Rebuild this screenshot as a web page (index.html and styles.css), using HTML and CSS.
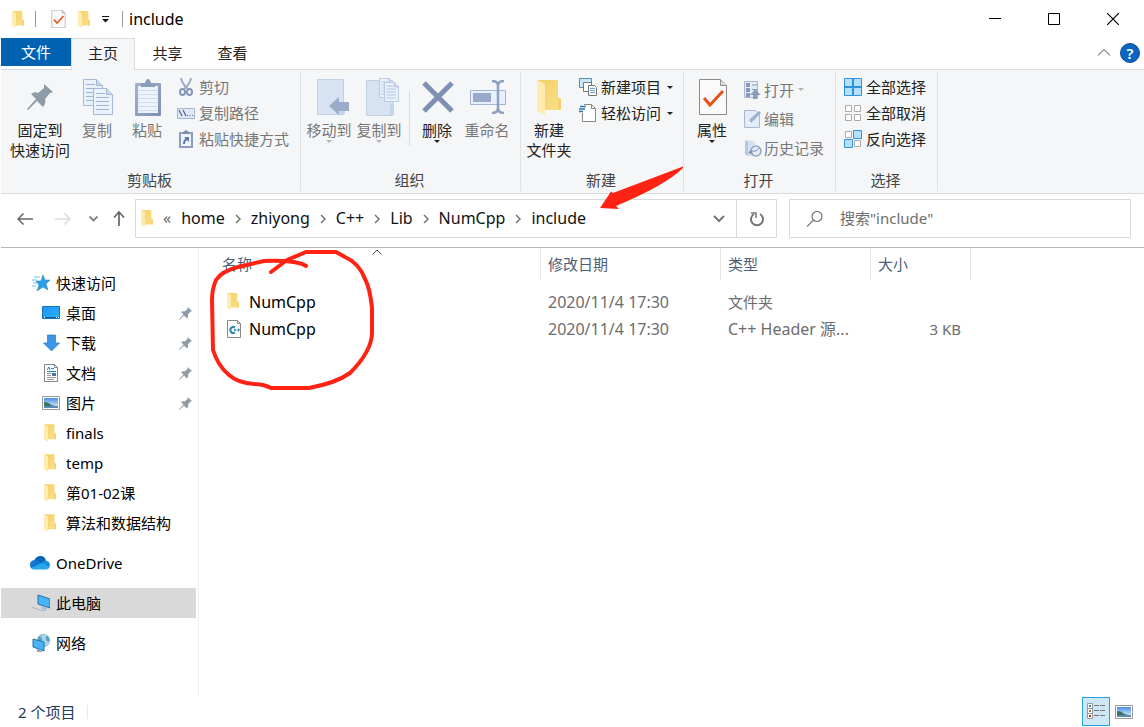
FILE: index.html
```html
<!DOCTYPE html>
<html lang="zh-CN">
<head>
<meta charset="utf-8">
<title>include</title>
<link rel="stylesheet" href="styles.css">
</head>
<body>
<svg class="defs" aria-hidden="true">
  <defs>
    <linearGradient id="gold" x1="0" y1="0" x2="1" y2="1"><stop offset="0" stop-color="#f3cf66"/><stop offset="1" stop-color="#fbe08c"/></linearGradient>
    <linearGradient id="slate" x1="0" y1="0" x2="1" y2="1"><stop offset="0" stop-color="#a5b3cc"/><stop offset="1" stop-color="#7d90b4"/></linearGradient>
    <linearGradient id="screen" x1="0" y1="0" x2="1" y2="1"><stop offset="0" stop-color="#1c94f5"/><stop offset="1" stop-color="#2db0ff"/></linearGradient>
    <linearGradient id="sky" x1="0" y1="0" x2="0" y2="1"><stop offset="0" stop-color="#4a8fe8"/><stop offset="1" stop-color="#e8f3fa"/></linearGradient>
  </defs>
  <symbol id="folder" viewBox="0 0 24 35">
    <path d="M1 0h20v17l3 2v11H6z" fill="url(#gold)"/>
    <path d="M21 18l3 1v11h-3z" fill="#f5d06c"/>
    <path d="M0 0l8 4v31l-8-4z" fill="#ffeab0"/>
  </symbol>
  <symbol id="pin" viewBox="0 0 26 26">
    <path d="M17 0l9 8-2 1-1 0-5 6c1 3 0 5-2 8l-6-6-9 9-1-1 9-10-5-5c3-2 5-2 7-1l6-5z" fill="#8f9ba6"/>
  </symbol>
  <symbol id="check" viewBox="0 0 28 36">
    <path d="M.5.5h21l6 6v29H.5z" fill="#fafafa" stroke="#8a8a8a"/><path d="M21.500.5v6h6" fill="#ddd" stroke="#8a8a8a"/>
    <path d="M5 19l6 7L24 12" fill="none" stroke="#e8531a" stroke-width="3"/>
  </symbol>
  <symbol id="page" viewBox="0 0 20 27">
    <path d="M.5.5h13l6 6v20H.5z" fill="#e9f1fb" stroke="#a7b8d6"/><path d="M13.500.5v6h6" fill="#c9d6ea" stroke="#a7b8d6"/>
    <path d="M3 5.500h9M3 9.500h13M3 13.500h13M3 17.500h13M3 21.500h13" stroke="#a2b4d4"/>
  </symbol>
  <symbol id="photo" viewBox="0 0 18 14">
    <path d="M.5.500h17v13H.5z" fill="#fff" stroke="#999"/><path d="M2 2h14v10H2z" fill="url(#sky)"/>
    <path d="M2 6q4 0 6 2t8 2v1H2z" fill="#3d6f62"/><path d="M2 10h14v2H2z" fill="#5c8bb0"/>
  </symbol>
  <symbol id="chev" viewBox="0 0 8 10"><path d="M2 1l4 4-4 4" fill="none" stroke="#777" stroke-width="1.500"/></symbol>
  <symbol id="down" viewBox="0 0 6 3"><path d="M0 0h6L3 3z" fill="currentColor"/></symbol>
</svg>

<header class="titlebar">
  <svg class="t-folder"><use href="#folder"/></svg>
  <span class="t-sep"></span>
  <button class="bare t-check" aria-label="属性"><svg width="15" height="18"><use href="#check"/></svg></button>
  <button class="bare t-new" aria-label="新建文件夹"><svg class="t-folder"><use href="#folder"/></svg></button>
  <button class="bare t-more" aria-label="自定义快速访问工具栏"><svg width="7" height="7" viewBox="0 0 7 7"><path d="M0 .5h7" stroke="#111"/><path d="M0 3h7L3.500 6.500z" fill="#111"/></svg></button>
  <span class="t-sep"></span>
  <span class="title">include</span>
  <div class="winbtns">
    <button class="bare" aria-label="最小化"><svg width="12" height="12"><path d="M0 5.500h12" stroke="#000"/></svg></button>
    <button class="bare" aria-label="最大化"><svg width="12" height="12"><path d="M.5.500h11v11H.5z" fill="none" stroke="#000"/></svg></button>
    <button class="bare" aria-label="关闭"><svg width="12" height="12"><path d="M0 0l12 12M12 0L0 12" stroke="#000" stroke-width="1.200"/></svg></button>
  </div>
</header>

<nav class="tabs">
  <button class="tab file">文件</button>
  <button class="tab active">主页</button>
  <button class="tab">共享</button>
  <button class="tab">查看</button>
  <div class="tabs-end">
    <button class="bare" aria-label="折叠功能区"><svg width="12" height="7"><path d="M0 6.500l6-6 6 6" fill="none" stroke="#999" stroke-width="1.300"/></svg></button>
    <button class="help" aria-label="帮助">?</button>
  </div>
</nav>

<section class="ribbon">
  <div class="group g-clip">
    <div class="tools">
      <button class="big wide"><span class="pic"><svg width="26" height="26"><use href="#pin"/></svg></span>固定到<br>快速访问</button>
      <button class="big off"><span class="pic nudge"><svg width="30" height="36"><use href="#page" width="20" height="27"/><use href="#page" x="10" y="9" width="20" height="27"/></svg></span>复制</button>
      <button class="big off"><span class="pic nudge"><svg width="26" height="37" viewBox="0 0 26 37"><rect y="4" width="26" height="33" rx="1" fill="url(#slate)"/><path d="M3 7h20v27H3z" fill="#edf3fb"/><path d="M3 11.500h20M3 15.500h20M3 19.500h20M3 23.500h20M3 27.500h20M3 31.500h20" stroke="#cfdcee"/><path d="M6 8V4h4q1-4 3-4t3 4h4v4z" fill="#8c9cbb"/></svg></span>粘贴</button>
      <div class="list">
        <button class="small off"><svg viewBox="0 0 18 18"><path d="M4 0q1 6 7 11M14 0q-1 6-7 11" fill="none" stroke="#9fadc8" stroke-width="2"/><ellipse cx="5.500" cy="14" rx="2.500" ry="3" fill="none" stroke="#8496b7" stroke-width="2"/><ellipse cx="12.500" cy="14" rx="2.500" ry="3" fill="none" stroke="#8496b7" stroke-width="2"/></svg>剪切</button>
        <button class="small off"><svg viewBox="0 0 18 18"><path d="M.5 4.500h17v10H.5z" fill="#dfe9f7" stroke="#a5b5d0"/><path d="M2 6l3 6M6 6l3 6M10 11.500h1M12.500 11.500h1M15 11.500h1" stroke="#51648b" stroke-width="1.200"/></svg>复制路径</button>
        <button class="small off"><svg viewBox="0 0 18 18"><path d="M2 2h14v16H2z" fill="#8c9dbd"/><path d="M4 4h10v12H4z" fill="#eef4fb"/><path d="M6 4V2l3-2 3 2v2z" fill="#7c8daf"/><path d="M7 7h5v5l-2-2q-2 1-2 4H6q0-4 2.500-5.500z" fill="#5f7aad"/></svg>粘贴快捷方式</button>
      </div>
    </div>
    <div class="label">剪贴板</div>
  </div>
  <div class="group g-org">
    <div class="tools">
      <button class="big off"><span class="pic shift"><svg width="32" height="36" viewBox="0 0 32 36"><path d="M.5.500h26v35H.5z" fill="#d7e2f3" stroke="#c2d0e5"/><path d="M23 26q5-4 5 9h-5z" fill="#c5d4e9"/><path d="M12 27l10-9v5h10v9H22v4z" fill="#9bacc9"/></svg></span>移动到<svg class="caret"><use href="#down"/></svg></button>
      <button class="big off"><span class="pic shift"><svg width="34" height="38" viewBox="0 0 34 38"><path d="M.5 2.500h26v35H.5z" fill="#d7e2f3" stroke="#c2d0e5"/><path d="M24 37V27q4-5 4 0v10z" fill="#c5d4e9"/><use href="#page" x="13" width="15" height="20"/><use href="#page" x="18" y="4" width="15" height="20"/></svg></span>复制到<svg class="caret"><use href="#down"/></svg></button>
      <span class="divider"></span>
      <button class="big"><span class="pic nudge"><svg width="32" height="32" viewBox="0 0 32 32"><path d="M2 2l28 28M30 2L2 30" stroke="#7e90b3" stroke-width="5"/></svg></span>删除<svg class="caret"><use href="#down"/></svg></button>
      <button class="big off"><span class="pic nudge"><svg width="36" height="34" viewBox="0 0 36 34"><path d="M.5 10.500h35v14H.5z" fill="#e7f0fc" stroke="#a3b5d6"/><path d="M3 13h18v9H3z" fill="#9aaaca"/><path d="M22 1q6 0 6 5v22q0 5-6 5M34 1q-6 0-6 5M28 28q0 5 6 5" fill="none" stroke="#8ea0c0" stroke-width="2.500"/></svg></span>重命名</button>
    </div>
    <div class="label">组织</div>
  </div>
  <div class="group g-new">
    <div class="tools">
      <button class="big"><span class="pic"><svg width="24" height="35"><use href="#folder"/></svg></span>新建<br>文件夹</button>
      <div class="list">
        <button class="small"><svg viewBox="0 0 18 18"><path d="M.5.500h12v9H.5z" fill="#cbe8f8" stroke="#5c8ba8"/><path d="M4.500 4.500h8v9h-8z" fill="#fff" stroke="#777"/><path d="M9.500 7.500h6l2 2v8h-8z" fill="#fff" stroke="#777"/><path d="M11 10.500h5M11 12.500h5M11 14.500h5" stroke="#6da4d4"/></svg>新建项目<svg class="caret"><use href="#down"/></svg></button>
        <button class="small"><svg viewBox="0 0 18 18"><path d="M3.500.500h9l4 4v13h-13z" fill="#fff"/><path d="M5 .5h7.500l4 4v13h-13V9M12.500.500v4h4" fill="none" stroke="#888"/><path d="M1 2.500h6M0 5h6M0 7.500h4" stroke="#2e75b6" stroke-width="1.500"/></svg>轻松访问<svg class="caret"><use href="#down"/></svg></button>
      </div>
    </div>
    <div class="label">新建</div>
  </div>
  <div class="group g-open">
    <div class="tools">
      <button class="big"><span class="pic nudge"><svg width="28" height="36"><use href="#check"/></svg></span>属性<svg class="caret"><use href="#down"/></svg></button>
      <div class="list loose">
        <button class="small off"><svg viewBox="0 0 18 18"><path d="M.5.500h13v16H.5z" fill="#e6eefa" stroke="#a8b6cf"/><path d="M2 2h4v4H2zM2 7h4v4H2zM2 12h4v4H2z" fill="#8798b8"/><path d="M8 4h5M8 8.500h5" stroke="#8798b8"/><path d="M11.500 8l5 6h-3v4H9v-4H6z" fill="#8b9cbc"/></svg>打开<svg class="caret"><use href="#down"/></svg></button>
        <button class="small off"><svg viewBox="0 0 18 18"><path d="M.5.500h11l4 4v13H.5z" fill="#e3edfa" stroke="#a8b8d3"/><path d="M3 15l2-5L15 1l2 2L7 13z" fill="#9eafcb"/><path d="M3 15l2-5 2 3z" fill="#fff"/></svg>编辑</button>
        <button class="small off"><svg viewBox="0 0 18 18"><path d="M1 1l10 1v15H4l-3-2z" fill="#d5e1f1"/><path d="M1 1l3 2v14l-3-2z" fill="#b6c7df"/><circle cx="12" cy="12" r="5" fill="#e6edf7" stroke="#94a5c2" stroke-width="1.500"/><path d="M12 12l3-3M12 12H8" stroke="#7d90b3"/><path d="M4 14l3-3 2 4z" fill="#7d90b3"/></svg>历史记录</button>
      </div>
    </div>
    <div class="label">打开</div>
  </div>
  <div class="group g-select">
    <div class="tools">
      <div class="list">
        <button class="small"><svg viewBox="0 0 18 18"><path d="M.5.500h17v17H.5z" fill="#b5e0fc" stroke="#2e93dd"/><path d="M9 0v18M0 9h18" stroke="#2e93dd" stroke-width="2"/></svg>全部选择</button>
        <button class="small"><svg viewBox="0 0 18 18"><path d="M1.500 1.500h6v6h-6zM10.500 1.500h6v6h-6zM1.500 10.500h6v6h-6zM10.500 10.500h6v6h-6z" fill="#fff" stroke="#aaa"/></svg>全部取消</button>
        <button class="small"><svg viewBox="0 0 18 18"><path d="M1.500 1.500h6v6h-6zM10.500 10.500h6v6h-6z" fill="#fff" stroke="#aaa"/><path d="M9.500.500h8v8h-8zM.5 9.500h8v8h-8z" fill="#b5e0fc" stroke="#2e93dd"/></svg>反向选择</button>
      </div>
    </div>
    <div class="label">选择</div>
  </div>
</section>

<div class="navrow">
  <div class="arrows">
    <button class="bare" aria-label="后退"><svg width="16" height="12"><path d="M16 6H1M6.500.500L1 6l5.500 5.500" fill="none" stroke="#666" stroke-width="1.500"/></svg></button>
    <button class="bare" aria-label="前进"><svg width="16" height="12"><path d="M0 6h15M9.500.500L15 6l-5.500 5.500" fill="none" stroke="#ddd" stroke-width="1.500"/></svg></button>
    <button class="bare" aria-label="最近位置"><svg width="9" height="6"><path d="M.5.500l4 4 4-4" fill="none" stroke="#777" stroke-width="1.700"/></svg></button>
    <button class="bare" aria-label="向上"><svg width="12" height="15"><path d="M6 15V1M1 6.500L6 1l5 5.500" fill="none" stroke="#666" stroke-width="1.700"/></svg></button>
  </div>
  <div class="address">
    <svg class="t-folder"><use href="#folder"/></svg>
    <span class="more">«</span>
    <a href="#">home</a><svg class="chev"><use href="#chev"/></svg>
    <a href="#">zhiyong</a><svg class="chev"><use href="#chev"/></svg>
    <a href="#">C++</a><svg class="chev"><use href="#chev"/></svg>
    <a href="#">Lib</a><svg class="chev"><use href="#chev"/></svg>
    <a href="#">NumCpp</a><svg class="chev"><use href="#chev"/></svg>
    <a href="#">include</a>
    <button class="bare history" aria-label="以前的位置"><svg width="12" height="8"><path d="M1 1l5 5 5-5" fill="none" stroke="#777" stroke-width="2"/></svg></button>
    <button class="bare reload" aria-label="刷新"><svg width="16" height="16"><path d="M11 3a6 6 0 1 1-6 0" fill="none" stroke="#777" stroke-width="2"/><path d="M2 2h5v5" fill="none" stroke="#777" stroke-width="1.500"/></svg></button>
  </div>
  <label class="search">
    <svg width="16" height="16"><circle cx="10" cy="5.500" r="5" fill="none" stroke="#777" stroke-width="1.200"/><path d="M6.500 9L0 15.500" stroke="#777" stroke-width="1.200"/></svg>
    <input type="search" aria-label="搜索" placeholder='搜索"include"'>
  </label>
</div>

<main>
  <aside class="side">
    <a href="#" class="item"><svg viewBox="0 0 18 18"><path d="M11 1l2 5h5l-4 4 2 6-5-3-6 4 2-6-3-4h5z" fill="#2b9fe8" stroke="#1877bd" stroke-width=".5"/><path d="M2 3h6M0 6h5M1 9h4M0 12h4" stroke="#6fc0f2"/></svg>快速访问</a>
    <a href="#" class="item sub"><svg viewBox="0 0 18 18"><path d="M.5 2.500h17v12H.5z" fill="url(#screen)" stroke="#1276c4"/><path d="M1 13.500h16" stroke="#0e5d9e"/><path d="M2 13.500h1M14 13.500h1M16 13.500h1" stroke="#fff"/></svg>桌面<svg class="pin"><use href="#pin"/></svg></a>
    <a href="#" class="item sub"><svg viewBox="0 0 18 18"><path d="M5.500 1h8v8h4l-8 8-8-8h4z" fill="#3a97e5" stroke="#1f78c6" stroke-width=".7"/></svg>下载<svg class="pin"><use href="#pin"/></svg></a>
    <a href="#" class="item sub"><svg viewBox="0 0 18 18"><path d="M2.500.500h10l3 3v14h-13z" fill="#fff" stroke="#888"/><path d="M12.500.500v3h3" fill="none" stroke="#888"/><path d="M5 6l2-3 1 3M9 4.500h3M5 7.500h9" fill="none" stroke="#2385c6"/><path d="M5 9.500h4M5 11.500h4M5 13.500h9M5 15.500h7" stroke="#999"/><path d="M10 9h4v3h-4z" fill="#4678a8"/></svg>文档<svg class="pin"><use href="#pin"/></svg></a>
    <a href="#" class="item sub"><svg viewBox="0 0 18 18"><use href="#photo" y="2" width="18" height="14"/></svg>图片<svg class="pin"><use href="#pin"/></svg></a>
    <a href="#" class="item sub"><svg><use href="#folder" x="2" width="12" height="18"/></svg>finals</a>
    <a href="#" class="item sub"><svg><use href="#folder" x="2" width="12" height="18"/></svg>temp</a>
    <a href="#" class="item sub"><svg><use href="#folder" x="2" width="12" height="18"/></svg>第01-02课</a>
    <a href="#" class="item sub"><svg><use href="#folder" x="2" width="12" height="18"/></svg>算法和数据结构</a>
    <a href="#" class="item root"><svg class="cloud" viewBox="0 0 20 14"><path d="M4 5Q6 0 10.500 0T16 5l-3 5-8-3z" fill="#0364b8"/><path d="M0 9q0-4.500 4.500-5 3 0 5 1.500l4 2.500-8 5L1 12q-1-1-1-3z" fill="#0f78d4"/><path d="M12 6q1.500-1.500 4-1.200Q20 5.500 20 9l-1 3-6-4z" fill="#1490df"/><path d="M1 12l11-5 7.500 4.500Q18.500 13.500 16 13.500H4.500Q2 13.500 1 12z" fill="#28a8ea"/></svg>OneDrive</a>
    <a href="#" class="item root selected"><svg viewBox="0 0 18 18"><path d="M6 1l12 4v9L6 10z" fill="#48b4fa" stroke="#28739f"/><path d="M10 12l5 2v2l-6-1z" fill="#a8c0cf"/><path d="M0 13l10 4 4-1" fill="none" stroke="#aab7c1"/></svg>此电脑</a>
    <a href="#" class="item root"><svg viewBox="0 0 18 18"><circle cx="11.500" cy="6.500" r="6.500" fill="#5f9fc0"/><path d="M8 2q3 2 2 5t4 5q4-1 4-5-3 1-4-1t1-5q-3-2-7 1z" fill="#a9d3e6"/><path d="M1 5l11 3v9L1 13z" fill="#48b4fa" stroke="#28739f"/><path d="M5 15l5 2v1H5z" fill="#8fa9b9"/></svg>网络</a>
  </aside>
  <section class="files">
    <table>
      <colgroup><col class="c-name"><col class="c-date"><col class="c-type"><col class="c-size"></colgroup>
      <thead><tr>
        <th class="name">名称<svg class="sort" width="10" height="6"><path d="M.5 5.500L5 1l4.500 4.500" fill="none" stroke="#555"/></svg></th>
        <th>修改日期</th><th>类型</th><th>大小</th>
      </tr></thead>
      <tbody>
        <tr class="gap"><td colspan="4"></td></tr>
        <tr><td class="name"><span><svg width="14" height="18"><use href="#folder" width="12" height="17"/></svg>NumCpp</span></td><td class="latin">2020/11/4 17:30</td><td>文件夹</td><td></td></tr>
        <tr><td class="name"><span><svg width="14" height="18" viewBox="0 0 14 18"><path d="M.5.500h10l3 3v14H.5z" fill="#fff" stroke="#888"/><path d="M10.500.500v3h3" fill="none" stroke="#888"/><path d="M8 7.500a3 3 0 1 0 0 5" fill="none" stroke="#2d86ad" stroke-width="2"/><path d="M6.500 10h3M8 8.500v3M10 10h3M11.500 8.500v3" stroke="#2d86ad"/></svg>NumCpp</span></td><td class="latin">2020/11/4 17:30</td><td class="latin">C++ Header 源...</td><td class="size">3 KB</td></tr>
      </tbody>
    </table>
  </section>
</main>

<footer class="status">
  <span class="count">2 个项目</span>
  <div class="views">
    <button class="view on" aria-label="详细信息"><svg width="18" height="17" viewBox="0 0 18 17"><path d="M.5.500h5v15h-5zM.5 5.500h5M.5 10.500h5" fill="#fff" stroke="#999"/><path d="M2 3h2" stroke="#3a7ca8" stroke-width="2"/><path d="M2 8h2" stroke="#b0703a" stroke-width="2"/><path d="M2 13h2" stroke="#c22" stroke-width="2"/><path d="M7 2.500h5M13 2.500h5M7 7.500h5M13 7.500h5M7 12.500h5M13 12.500h5" stroke="#777"/></svg></button>
    <button class="view" aria-label="大缩略图"><svg width="18" height="14"><use href="#photo"/></svg></button>
  </div>
</footer>

<svg class="ink" width="700" height="400" aria-hidden="true">
  <path d="M683 166.500L613 193l-2-1.500L600 208l19 1-3-3q50-21 67-38z" fill="#ff2313"/>
  <path d="M306 266Q297 260 264 261L238 267Q222 271 216 280Q212 289 212 300L213 350Q218 366 229 375Q238 383 254 384Q263 384 271 388L309 388Q336 383 350 373Q371 352 372 334L372 308Q370 288 365 279Q359 263 345 257L336 252L306 252L287 260L271 272" fill="none" stroke="#ff2313" stroke-width="4" stroke-linecap="round" stroke-linejoin="round"/>
</svg>
</body>
</html>
```

FILE: styles.css
```css
* { box-sizing: border-box; }
body {
  margin: 0;
  padding-left: 1px;
  min-height: 100vh;
  display: flex;
  flex-direction: column;
  background: #fff;
  color: #000;
  font: 15px/20px "Noto Sans", "Noto Sans CJK SC", sans-serif;
}
button, input { font: inherit; color: inherit; margin: 0; }
button { border: 0; padding: 0; background: none; }
a { color: inherit; text-decoration: none; }
svg { flex: none; display: block; }
.defs { position: absolute; width: 0; height: 0; }
.bare { display: flex; align-items: center; justify-content: center; }
.t-folder { width: 12px; height: 17px; }

.titlebar { display: flex; align-items: center; height: 38px; padding-left: 11px; }
.t-sep { width: 1px; height: 16px; background: #999; margin-left: 11px; }
.t-check { margin-left: 15px; }
.t-new { margin-left: 12px; }
.t-more { margin-left: 12px; }
.t-more + .t-sep { margin-left: 13px; }
.title { margin-left: 6px; font-size: 16px; }
.winbtns { display: flex; margin-left: auto; padding-right: 2px; }
.winbtns .bare { width: 59px; height: 38px; }

.tabs { display: flex; height: 32px; border-bottom: 1px solid #dadbdc; }
.tab { width: 65px; height: 31px; padding-bottom: 1px; color: #222; }
.tab.file { width: 70px; height: 28px; background: #0063b1; color: #fff; }
.tab.active { width: 64px; height: 32px; padding-bottom: 3px; background: #f5f6f7; border: 1px solid #dadbdc; border-bottom: 0; }
.tabs-end { display: flex; align-items: center; gap: 10px; margin-left: auto; padding: 0 4px 2px 0; }
.help { width: 20px; height: 20px; border-radius: 50%; background: #0a64c4; border: 1px solid #134f92; color: #fff; font-weight: 600; line-height: 18px; }

.ribbon { display: flex; height: 124px; padding-top: 2px; background: #f5f6f7; border-bottom: 1px solid #dadbdc; }
.group { display: flex; flex-direction: column; height: 119px; border-right: 1px solid #e1e2e4; }
.g-clip { width: 300px; }
.g-org { width: 220px; }
.g-new { width: 163px; }
.g-open { width: 152px; }
.g-select { width: 102px; }
.tools { display: flex; flex: 1; padding-left: 3px; }
.g-clip .tools { padding-left: 7px; }
.label { color: #444; text-align: center; height: 20px; margin-bottom: 1px; padding-right: 2px; }
.big { display: flex; flex-direction: column; align-items: center; align-self: flex-start; width: 50px; white-space: nowrap; color: #222; }
.big.wide { width: 64px; }
.pic { display: flex; align-items: center; justify-content: center; height: 48px; padding-top: 2px; }
.pic.nudge { padding-left: 2px; }
.pic.shift { padding-left: 8px; }
.off { color: #777; }
.off .caret { color: #b5b5b5; }
.caret { width: 6px; height: 3px; }
.list { display: flex; flex-direction: column; padding: 2px 0 0 5px; }
.small { display: flex; align-items: center; gap: 4px; height: 26px; white-space: nowrap; color: #222; }
.small.off { color: #777; }
.small > svg:first-child { width: 18px; height: 18px; }
.small .caret { margin-left: 2px; }
.loose { padding: 3px 0 0 7px; }
.loose .small { height: 29px; gap: 2px; }
.divider { width: 1px; height: 55px; background: #dadbdc; margin: 19px 2px 0 5px; }

.navrow { display: flex; height: 54px; padding: 5px 13px 9px 0; border-bottom: 1px solid #b9b9b9; }
.arrows { display: flex; align-items: center; width: 134px; padding-left: 16px; }
.arrows .bare { height: 24px; margin-right: 22px; }
.arrows .bare:nth-child(2) { margin-right: 18px; }
.arrows .bare:nth-child(3) { margin-right: 15px; }
.arrows .bare:nth-child(4) { margin-right: 0; }
.address { display: flex; align-items: center; flex: 635; min-width: 0; border: 1px solid #d9d9d9; padding-left: 5px; font-size: 16px; }
.more { margin: 0 10px; color: #666; padding-bottom: 2px; }
.address a { color: #111; padding-bottom: 2px; }
.chev { width: 8px; height: 10px; margin: 0 9px; }
.history { width: 36px; height: 37px; margin-left: auto; border-right: 1px solid #d9d9d9; }
.reload { width: 39px; height: 37px; }
.search { display: flex; align-items: center; flex: 323; min-width: 0; margin-left: 12px; border: 1px solid #d9d9d9; padding-left: 17px; gap: 17px; }
.search input { flex: 1; min-width: 0; border: 0; padding: 0 0 2px; background: none; outline: 0; }
.search input::placeholder { color: #6d6d6d; opacity: 1; }

main { display: flex; flex: 1; }
.side { width: 198px; padding: 20px 2px 0 0; border-right: 1px solid #f0f0f0; }
.item { display: flex; align-items: center; height: 30px; padding-left: 31px; gap: 6px; white-space: nowrap; }
.item > svg:first-child { width: 18px; height: 18px; }
.item.sub { padding-left: 41px; }
.item.root { margin-top: 10px; }
.item .cloud:first-child { width: 20px; height: 14px; margin-left: -2px; }
.item .pin { width: 13px; height: 13px; margin-left: auto; margin-right: 4px; }
.selected { background: #d9d9d9; }

.files { flex: 1; min-width: 0; }
table { table-layout: fixed; width: 772px; border-collapse: separate; border-spacing: 0; }
.c-name { width: 342px; }
.c-date { width: 180px; }
.c-type { width: 150px; }
.c-size { width: 100px; }
th { position: relative; height: 32px; padding: 0 0 0 7px; text-align: left; font-weight: 400; color: #4c607a; border-right: 1px solid #e5e5e5; }
th.name { padding-left: 23px; }
.sort { position: absolute; top: 1px; left: 50%; margin-left: 2px; }
.gap td { height: 8px; }
td { height: 27px; padding: 0 0 0 7px; color: #6d6d6d; white-space: nowrap; }
td.name { padding-left: 28px; color: #000; font-size: 16px; }
td.name span { display: flex; align-items: center; gap: 8px; }
td.latin { font-size: 16px; }
td.size { text-align: right; padding: 0 10px 0 0; }

.status { display: flex; align-items: center; height: 31px; color: #1e395b; }
.count { padding-left: 17px; padding-right: 12px; line-height: 14px; border-right: 1px solid #e8e8e8; }
.views { display: flex; align-items: center; margin-left: auto; padding-right: 6px; }
.view { display: flex; align-items: center; justify-content: center; width: 28px; height: 29px; }
.view.on { background: #cce8f6; border: 1px solid #26a0da; }

.ink { position: absolute; left: 0; top: 0; pointer-events: none; }
```
